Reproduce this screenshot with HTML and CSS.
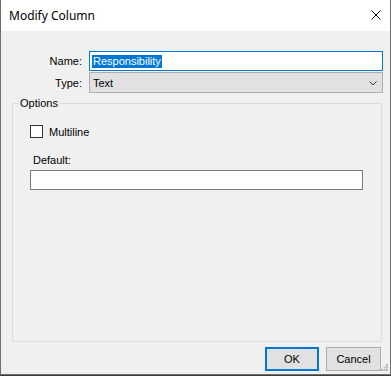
FILE: index.html
```html
<!DOCTYPE html>
<html lang="en">
<head>
    <meta charset="UTF-8">
    <meta name="viewport" content="width=device-width, initial-scale=1.0">
    <title>Modify Column</title>

    <link rel="stylesheet" href="styles.css">
</head>
<body>

    <div class="window">

        <div class="titlebar">
            <span class="title">Modify Column</span>
            <svg class="close" width="10" height="10" viewBox="0 0 10 10">
                <path d="M0.5 0.5 L9.5 9.5 M9.5 0.5 L0.5 9.5" stroke="#000" stroke-width="1" fill="none"/>
            </svg>
        </div>

        <div class="content">

            <div class="row">
                <label class="label">Name:</label>
                <div class="textbox focused"><span class="sel">Responsibility</span></div>
            </div>

            <div class="row row-type">
                <label class="label">Type:</label>
                <div class="combo">
                    <span>Text</span>
                    <svg class="chevron" width="8" height="5" viewBox="0 0 8 5">
                        <path d="M0.5 0.5 L4 4 L7.5 0.5" stroke="#333" stroke-width="1" fill="none"/>
                    </svg>
                </div>
            </div>

            <fieldset class="group">
                <legend>Options</legend>

                <div class="check-row">
                    <span class="checkbox"></span>
                    <span>Multiline</span>
                </div>

                <div class="default-label">Default:</div>
                <div class="textbox default-box"></div>
            </fieldset>

            <div class="buttons">
                <button class="button ok">OK</button>
                <button class="button">Cancel</button>
            </div>

        </div>

        <svg class="grip" width="7" height="7" viewBox="0 0 7 7">
            <rect x="5" y="0" width="2" height="2" fill="#b8b8b8"/>
            <rect x="2.5" y="2.5" width="2" height="2" fill="#b8b8b8"/>
            <rect x="5" y="2.5" width="2" height="2" fill="#b8b8b8"/>
            <rect x="0" y="5" width="2" height="2" fill="#b8b8b8"/>
            <rect x="2.5" y="5" width="2" height="2" fill="#b8b8b8"/>
            <rect x="5" y="5" width="2" height="2" fill="#b8b8b8"/>
        </svg>

    </div>

</body>
</html>
```

FILE: styles.css
```css
body{
    margin: 0;
    background: #3c3c3c;
    overflow: hidden;
    font-family: "Liberation Sans", Arial, sans-serif;
    font-size: 11px;
    color: #000;
}

.window{
    position: relative;
    width: 389px;
    height: 374px;
    background: #f0f0f0;
    border-left: 1px solid #6e6e6e;
    border-right: 1px solid #6e6e6e;
    border-bottom: 1px solid #6e6e6e;
    display: flex;
    flex-direction: column;
}

.titlebar{
    height: 31px;
    background: #fff;
    display: flex;
    align-items: center;
    justify-content: space-between;
    padding: 0 8px 0 8px;
}

.title{
    font-family: "Noto Sans", "Open Sans", sans-serif;
    font-size: 12px;
    margin-top: -1px;
}

.close{
    margin-right: 1px;
    margin-top: -1px;
}

.content{
    padding: 20px 0 0 11px;
    display: flex;
    flex-direction: column;
}

.row{
    display: flex;
    align-items: center;
    height: 20px;
}

.row-type{
    margin-top: 1px;
    height: 21px;
}

.label{
    width: 70px;
    text-align: right;
    margin-right: 7px;
}

.textbox{
    box-sizing: border-box;
    height: 20px;
    width: 294px;
    background: #fff;
    border: 1px solid #7a7a7a;
    display: flex;
    align-items: center;
    padding-left: 2px;
}

.textbox.focused{
    border-color: #0078d7;
}

.sel{
    background: #0078d7;
    color: #fff;
    line-height: 13px;
    padding: 0 1px;
}

.combo{
    box-sizing: border-box;
    height: 21px;
    width: 294px;
    background: #e1e1e1;
    border: 1px solid #adadad;
    display: flex;
    align-items: center;
    justify-content: space-between;
    padding: 0 5px 0 3px;
}

.chevron{
    margin-top: 1px;
}

.group{
    box-sizing: border-box;
    margin: 4px 0 0 0;
    padding: 0 0 0 17px;
    width: 370px;
    height: 245px;
    border: 1px solid #dcdcdc;
    min-width: 0;
}

.group legend{
    padding: 0 1px;
    margin-left: -11px;
    line-height: 13px;
}

.check-row{
    display: flex;
    align-items: center;
    margin-top: 15px;
    height: 13px;
}

.checkbox{
    box-sizing: border-box;
    width: 13px;
    height: 13px;
    background: #fff;
    border: 1px solid #333;
    margin-right: 6px;
}

.default-label{
    margin: 16px 0 0 3px;
    line-height: 13px;
}

.default-box{
    margin-top: 3px;
    width: 333px;
}

.buttons{
    display: flex;
    justify-content: flex-end;
    gap: 7px;
    margin-top: 5px;
    padding-right: 9px;
}

.button{
    box-sizing: border-box;
    font-family: "Liberation Sans", Arial, sans-serif;
    font-size: 11px;
    color: #000;
    height: 24px;
    width: 55px;
    background: #e1e1e1;
    border: 1px solid #adadad;
    padding: 0;
}

.button.ok{
    width: 54px;
    border: 2px solid #0078d7;
}

.grip{
    position: absolute;
    right: 2px;
    bottom: 3px;
}
```
